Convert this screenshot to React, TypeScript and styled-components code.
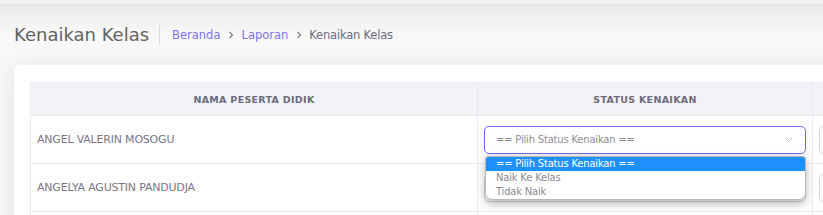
import React from "react";
import styled, { createGlobalStyle } from "styled-components";

const GlobalStyle = createGlobalStyle`
  html, body { margin: 0; padding: 0; }
  body {
    background: #f8f8f8;
    font-family: "DejaVu Sans", "Open Sans", sans-serif;
    color: #6e6b7b;
    overflow: hidden;
    width: 823px;
    height: 215px;
  }
  * { box-sizing: border-box; }
`;

const Page = styled.div`
  position: relative;
  width: 823px;
  height: 215px;
  overflow: hidden;
  padding: 0 14px;
`;

const NavShadow = styled.div`
  position: absolute;
  left: 0;
  top: 0;
  width: 100%;
  height: 34px;
  pointer-events: none;
  background: linear-gradient(
    180deg,
    #f2f2f2 0px,
    #f2f2f2 3px,
    #e6e6e6 4px,
    #f0f0f0 16px,
    rgba(248, 248, 248, 0) 34px
  );
`;

const HeaderRow = styled.div`
  position: relative;
  display: flex;
  align-items: center;
  height: 20px;
  margin-top: 25px;
`;

const Title = styled.h2`
  margin: 0;
  font-size: 18px;
  font-weight: 400;
  color: #636363;
  line-height: 20px;
  padding-right: 10px;
  border-right: 1px solid #d6dce1;
`;

const Crumbs = styled.ol`
  display: flex;
  align-items: center;
  list-style: none;
  margin: 0;
  padding: 0 0 0 12px;
  font-size: 11.5px;
  line-height: 20px;
`;

const Crumb = styled.li<{ $active?: boolean }>`
  color: ${(p) => (p.$active ? "#6e6b7b" : "#7d72f0")};
  display: flex;
  align-items: center;
  letter-spacing: ${(p) => (p.$active ? "-0.2px" : "0")};
`;

const Sep = styled.span`
  display: inline-flex;
  align-items: center;
  margin: 0 7px 0 8px;
`;

const Card = styled.div`
  margin-top: 20px;
  width: 1100px;
  background: #fff;
  border-radius: 6px;
  box-shadow: 0 4px 24px 0 rgba(34, 41, 47, 0.1);
  padding: 17px 16px;
`;

const Table = styled.table`
  border-collapse: collapse;
  table-layout: fixed;
  width: 1060px;
`;

const Th = styled.th<{ $w: number }>`
  width: ${(p) => p.$w}px;
  height: 33px;
  background: #f3f2f7;
  border: 1px solid #ebe9f1;
  font-size: 9.5px;
  font-weight: 600;
  letter-spacing: 0.3px;
  text-transform: uppercase;
  color: #6e6b7b;
  text-align: center;
  padding: 0 6px;
`;

const Td = styled.td`
  height: 48px;
  border: 1px solid #ebe9f1;
  font-size: 11px;
  letter-spacing: -0.2px;
  color: #7a7786;
  padding: 0 6px;
  vertical-align: middle;
`;

const SelectCell = styled.td`
  height: 48px;
  border: 1px solid #ebe9f1;
  padding: 0 6px 0 6px;
  vertical-align: middle;
`;

const SelectWrap = styled.div`
  position: relative;
`;

const SelectBox = styled.div<{ $focused?: boolean }>`
  display: flex;
  align-items: center;
  justify-content: space-between;
  height: 28px;
  padding: 0 12px 0 11px;
  border: 1px solid ${(p) => (p.$focused ? "#7367f0" : "#d8d6de")};
  border-radius: 5px;
  background: #fff;
  font-size: 10px;
  letter-spacing: -0.2px;
  color: #8f8d96;
  box-shadow: ${(p) => (p.$focused ? "0 3px 10px 0 rgba(34,41,47,0.1)" : "none")};
`;

const Chevron = () => (
  <svg width="9" height="6" viewBox="0 0 9 6" fill="none">
    <path d="M1 1l3.5 3.5L8 1" stroke="#c4c2cc" strokeWidth="1" />
  </svg>
);

const Dropdown = styled.ul`
  position: absolute;
  left: 1px;
  right: 0;
  top: 30px;
  margin: 0;
  padding: 0;
  list-style: none;
  background: #fff;
  border: 1px solid #b8b8b8;
  border-radius: 3px 3px 7px 7px;
  box-shadow: 0 4px 10px rgba(0, 0, 0, 0.28);
  overflow: hidden;
  z-index: 5;
`;

const Option = styled.li<{ $selected?: boolean }>`
  height: 14px;
  line-height: 14px;
  font-size: 10px;
  letter-spacing: -0.2px;
  padding: 0 10px;
  color: ${(p) => (p.$selected ? "#fff" : "#8c8792")};
  background: ${(p) => (p.$selected ? "#1e90ff" : "transparent")};
  white-space: nowrap;
`;

const ChevronRight = () => (
  <svg width="6" height="8" viewBox="0 0 6 8" fill="none">
    <path d="M1.5 1l3 3-3 3" stroke="#7a7786" strokeWidth="1.1" />
  </svg>
);

const students = ["ANGEL VALERIN MOSOGU", "ANGELYA AGUSTIN PANDUDJA", ""];

export default function App() {
  return (
    <>
      <GlobalStyle />
      <Page>
        <NavShadow />
        <HeaderRow>
          <Title>Kenaikan Kelas</Title>
          <Crumbs>
            <Crumb>Beranda</Crumb>
            <Sep><ChevronRight /></Sep>
            <Crumb>Laporan</Crumb>
            <Sep><ChevronRight /></Sep>
            <Crumb $active>Kenaikan Kelas</Crumb>
          </Crumbs>
        </HeaderRow>
        <Card>
          <Table>
            <thead>
              <tr>
                <Th $w={447}>Nama Peserta Didik</Th>
                <Th $w={335}>Status Kenaikan</Th>
                <Th $w={278} />
              </tr>
            </thead>
            <tbody>
              {students.map((name, i) => (
                <tr key={i}>
                  <Td>{name}</Td>
                  <SelectCell>
                    <SelectWrap>
                      <SelectBox $focused={i === 0}>
                        <span>{name ? "== Pilih Status Kenaikan ==" : ""}</span>
                        <Chevron />
                      </SelectBox>
                      {i === 0 && (
                        <Dropdown>
                          <Option $selected>== Pilih Status Kenaikan ==</Option>
                          <Option>Naik Ke Kelas</Option>
                          <Option>Tidak Naik</Option>
                        </Dropdown>
                      )}
                    </SelectWrap>
                  </SelectCell>
                  <SelectCell>
                    <SelectBox />
                  </SelectCell>
                </tr>
              ))}
            </tbody>
          </Table>
        </Card>
      </Page>
    </>
  );
}
